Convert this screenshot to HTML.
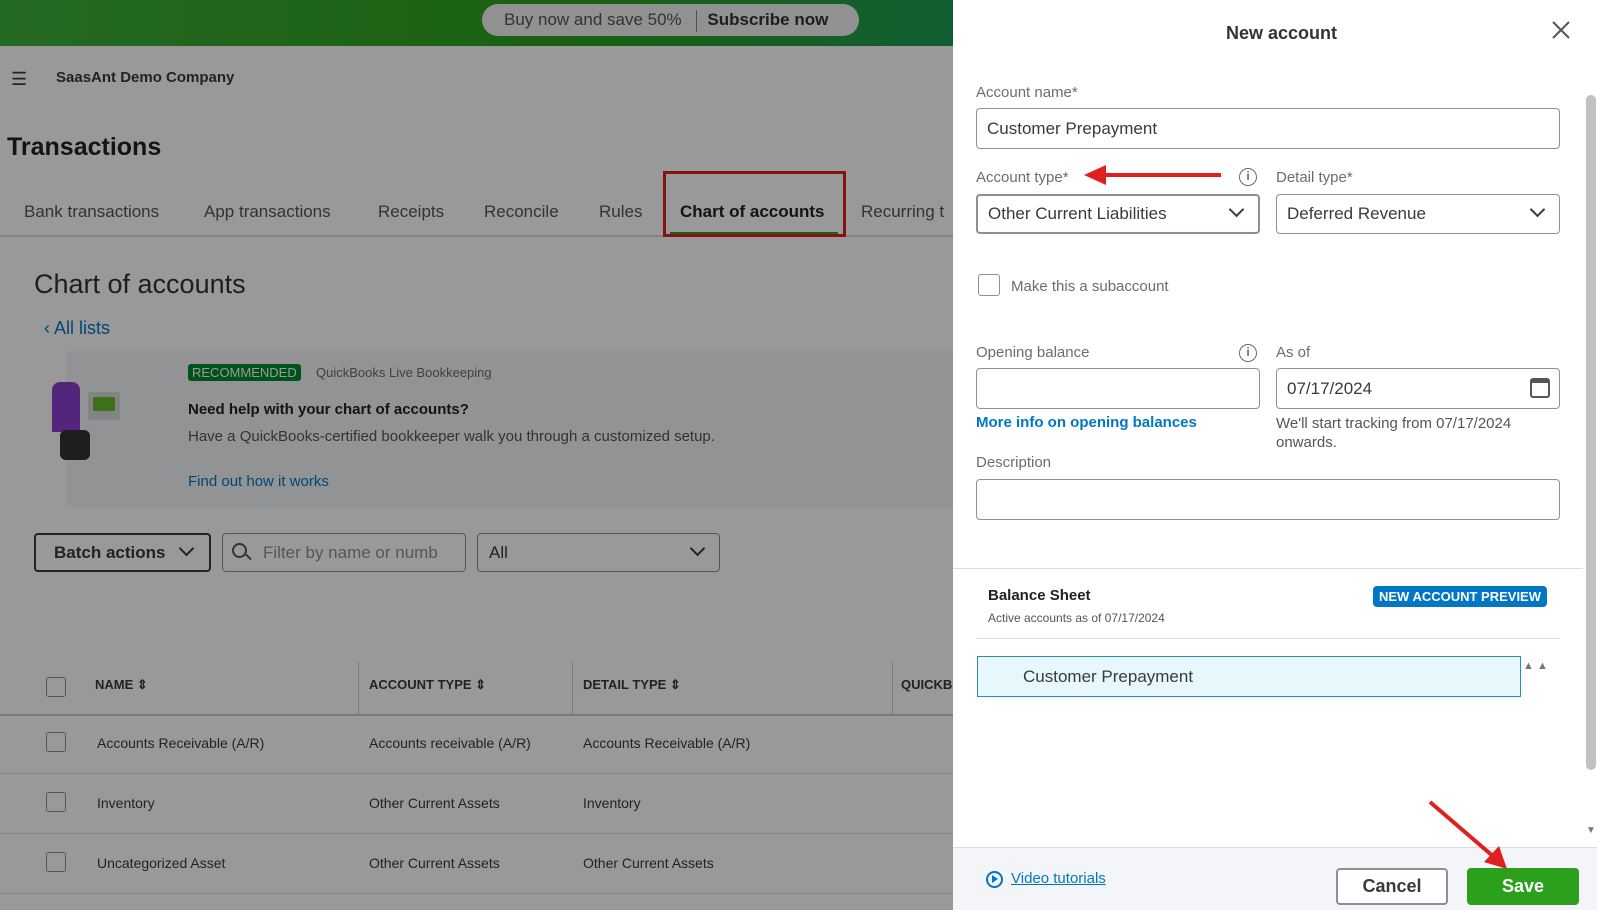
<!DOCTYPE html>
<html><head><meta charset="utf-8"><style>
*{box-sizing:border-box;margin:0;padding:0}
body{width:1597px;height:910px;overflow:hidden;position:relative;font-family:"Liberation Sans",sans-serif;background:#fff;color:#393a3d}
.a{position:absolute;white-space:nowrap}
.ov{position:absolute;left:0;top:0;width:953px;height:910px;background:rgba(0,0,0,0.4)}
.cb{position:absolute;width:20px;height:20px;border:1.5px solid #8d9096;border-radius:3px;background:#fff}
.lbl{font-size:15px;color:#6b6c72}
.inp{position:absolute;border:1px solid #8d9096;border-radius:4px;background:#fff}
.chev{position:absolute;width:11px;height:11px;border-right:2px solid #393a3d;border-bottom:2px solid #393a3d;transform:rotate(45deg)}
.info{position:absolute;width:18px;height:18px;border:1.5px solid #6b6c72;border-radius:50%;font-size:12px;text-align:center;line-height:15px;color:#6b6c72;font-weight:bold}
</style></head><body>
<div class="a" style="left:0;top:0;width:953px;height:46px;background:linear-gradient(90deg,#3fb13a,#2ca01c 60%,#1f9d55)"></div>
<div class="a" style="left:482px;top:4px;width:377px;height:32px;border-radius:16px;background:#f2f2f2;font-size:17px;line-height:32px;padding-left:22px;color:#555">Buy now and save 50% <span style="display:inline-block;width:1px;height:22px;background:#888;vertical-align:middle;margin:0 10px"></span><b style="color:#333">Subscribe now</b></div>
<div class="a" style="left:11px;top:69px;font-size:18px">☰</div>
<div class="a" style="left:56px;top:69px;font-size:15px;font-weight:bold">SaasAnt Demo Company</div>
<div class="a" style="left:7px;top:133px;font-size:25px;font-weight:bold;color:#222">Transactions</div>
<div class="a" style="left:0;top:202px;font-size:17px;color:#555">
<span class="a" style="left:24px">Bank transactions</span><span class="a" style="left:204px">App transactions</span><span class="a" style="left:378px">Receipts</span><span class="a" style="left:484px">Reconcile</span><span class="a" style="left:599px">Rules</span><span class="a" style="left:680px;color:#222;font-weight:bold">Chart of accounts</span><span class="a" style="left:861px">Recurring t</span></div>
<div class="a" style="left:0;top:235px;width:953px;height:2px;background:#ddd"></div>
<div class="a" style="left:670px;top:232px;width:168px;height:3px;background:#2ca01c"></div>
<div class="a" style="left:663px;top:171px;width:183px;height:66px;border:3px solid #e02020"></div>
<div class="a" style="left:34px;top:269px;font-size:27px;color:#333">Chart of accounts</div>
<div class="a" style="left:44px;top:318px;font-size:18px;color:#0077c5">‹ All lists</div>
<div class="a" style="left:66px;top:351px;width:887px;height:156px;background:#f4f5f8"></div>
<div class="a" style="left:52px;top:382px;width:28px;height:50px;background:#8b3fd1;border-radius:8px 8px 0 0"></div>
<div class="a" style="left:88px;top:392px;width:32px;height:28px;background:#d8dadd"></div>
<div class="a" style="left:93px;top:397px;width:22px;height:14px;background:#6bbd2a"></div>
<div class="a" style="left:60px;top:430px;width:30px;height:30px;background:#333;border-radius:6px"></div>
<div class="a" style="left:188px;top:364px;background:#00892e;color:#fff;font-size:13px;padding:1px 4px;border-radius:3px">RECOMMENDED</div>
<div class="a" style="left:316px;top:365px;font-size:13px;color:#6b6c72">QuickBooks Live Bookkeeping</div>
<div class="a" style="left:188px;top:401px;font-size:15px;font-weight:bold;color:#222">Need help with your chart of accounts?</div>
<div class="a" style="left:188px;top:428px;font-size:15px;color:#555">Have a QuickBooks-certified bookkeeper walk you through a customized setup.</div>
<div class="a" style="left:188px;top:473px;font-size:15px;color:#0077c5">Find out how it works</div>
<div class="a" style="left:34px;top:533px;width:177px;height:39px;border:2px solid #393a3d;border-radius:4px;font-size:17px;line-height:35px;padding-left:18px;font-weight:bold">Batch actions</div><div class="chev" style="left:181px;top:543px"></div>
<div class="inp" style="left:222px;top:533px;width:244px;height:39px;font-size:17px;line-height:37px;padding-left:40px;color:#8d9096">Filter by name or numb</div>
<div class="a" style="left:232px;top:543px;width:15px;height:15px;border:2px solid #555;border-radius:50%"></div>
<div class="a" style="left:245px;top:556px;width:7px;height:2px;background:#555;transform:rotate(45deg)"></div>
<div class="inp" style="left:477px;top:533px;width:243px;height:39px;font-size:17px;line-height:37px;padding-left:11px">All</div><div class="chev" style="left:692px;top:543px"></div>
<div class="a" style="left:0;top:714px;width:953px;height:2px;background:#ccc"></div>
<div class="a" style="left:358px;top:662px;width:1px;height:52px;background:#ccc"></div>
<div class="a" style="left:572px;top:662px;width:1px;height:52px;background:#ccc"></div>
<div class="a" style="left:892px;top:662px;width:1px;height:52px;background:#ccc"></div>
<div class="cb" style="left:46px;top:677px"></div>
<div class="a" style="left:95px;top:677px;font-size:13px;font-weight:bold">NAME ⇕</div>
<div class="a" style="left:369px;top:677px;font-size:13px;font-weight:bold">ACCOUNT TYPE ⇕</div>
<div class="a" style="left:583px;top:677px;font-size:13px;font-weight:bold">DETAIL TYPE ⇕</div>
<div class="a" style="left:901px;top:677px;font-size:13px;font-weight:bold">QUICKB</div>
<div class="a" style="left:0;top:773px;width:953px;height:1px;background:#ddd"></div>
<div class="a" style="left:0;top:833px;width:953px;height:1px;background:#ddd"></div>
<div class="a" style="left:0;top:893px;width:953px;height:1px;background:#ddd"></div>
<div class="cb" style="left:46px;top:732px"></div><div class="cb" style="left:46px;top:792px"></div><div class="cb" style="left:46px;top:852px"></div>
<div class="a" style="left:97px;top:735px;font-size:14px">Accounts Receivable (A/R)</div>
<div class="a" style="left:369px;top:735px;font-size:14px">Accounts receivable (A/R)</div>
<div class="a" style="left:583px;top:735px;font-size:14px">Accounts Receivable (A/R)</div>
<div class="a" style="left:97px;top:795px;font-size:14px">Inventory</div>
<div class="a" style="left:369px;top:795px;font-size:14px">Other Current Assets</div>
<div class="a" style="left:583px;top:795px;font-size:14px">Inventory</div>
<div class="a" style="left:97px;top:855px;font-size:14px">Uncategorized Asset</div>
<div class="a" style="left:369px;top:855px;font-size:14px">Other Current Assets</div>
<div class="a" style="left:583px;top:855px;font-size:14px">Other Current Assets</div>
<div class="ov"></div>
<div class="a" style="left:953px;top:0;width:644px;height:910px;background:#fff"></div>
<div class="a" style="left:1226px;top:23px;font-size:18px;font-weight:bold;color:#333">New account</div>
<svg class="a" style="left:1552px;top:21px" width="18" height="18"><path d="M1 1L17 17M17 1L1 17" stroke="#555" stroke-width="2"/></svg>
<div class="a" style="left:1586px;top:95px;width:10px;height:675px;background:#c1c1c1;border-radius:5px"></div>
<div class="a lbl" style="left:976px;top:84px">Account name*</div>
<div class="inp" style="left:976px;top:108px;width:584px;height:41px;font-size:17px;line-height:39px;padding-left:10px">Customer Prepayment</div>
<div class="a lbl" style="left:976px;top:169px">Account type*</div>
<div class="info" style="left:1239px;top:168px">i</div>
<div class="a lbl" style="left:1276px;top:169px">Detail type*</div>
<div class="inp" style="left:976px;top:194px;width:284px;height:40px;border:2px solid #8d9096;font-size:17px;line-height:36px;padding-left:10px">Other Current Liabilities</div><div class="chev" style="left:1231px;top:204px"></div>
<div class="inp" style="left:1276px;top:194px;width:284px;height:40px;font-size:17px;line-height:38px;padding-left:10px">Deferred Revenue</div><div class="chev" style="left:1532px;top:204px"></div>
<div class="cb" style="left:978px;top:274px;width:22px;height:22px;border-width:1px"></div>
<div class="a lbl" style="left:1011px;top:278px">Make this a subaccount</div>
<div class="a lbl" style="left:976px;top:344px">Opening balance</div>
<div class="info" style="left:1239px;top:344px">i</div>
<div class="a lbl" style="left:1276px;top:344px">As of</div>
<div class="inp" style="left:976px;top:368px;width:284px;height:41px"></div>
<div class="inp" style="left:1276px;top:368px;width:284px;height:41px;font-size:17px;line-height:39px;padding-left:10px">07/17/2024</div>
<div class="a" style="left:1530px;top:378px;width:20px;height:20px;border:2px solid #555;border-radius:3px;border-top-width:5px"></div>
<div class="a" style="left:976px;top:414px;font-size:15px;font-weight:bold;color:#0077c5">More info on opening balances</div>
<div class="a lbl" style="left:1276px;top:414px;line-height:19px;color:#555">We'll start tracking from 07/17/2024<br>onwards.</div>
<div class="a lbl" style="left:976px;top:454px">Description</div>
<div class="inp" style="left:976px;top:479px;width:584px;height:41px"></div>
<div class="a" style="left:953px;top:568px;width:630px;height:1px;background:#ddd"></div>
<div class="a" style="left:988px;top:587px;font-size:15px;font-weight:bold;color:#222">Balance Sheet</div>
<div class="a" style="left:1373px;top:586px;width:174px;height:21px;background:#0077c5;color:#fff;border-radius:4px;font-size:13px;font-weight:bold;text-align:center;line-height:21px">NEW ACCOUNT PREVIEW</div>
<div class="a" style="left:988px;top:611px;font-size:12px;color:#555">Active accounts as of 07/17/2024</div>
<div class="a" style="left:977px;top:638px;width:583px;height:1px;background:#ddd"></div>
<div class="a" style="left:977px;top:656px;width:544px;height:41px;background:#e6f8fc;border:1px solid #2a8fa0;font-size:17px;line-height:39px;padding-left:45px">Customer Prepayment</div>
<div class="a" style="left:1523px;top:660px;font-size:11px;color:#777">▲ ▲</div>
<div class="a" style="left:1586px;top:825px;font-size:10px;color:#777">▼</div>
<div class="a" style="left:953px;top:847px;width:644px;height:63px;background:#f4f5f8;border-top:1px solid #ddd"></div>
<div class="a" style="left:986px;top:871px;width:17px;height:17px;border:2px solid #0077c5;border-radius:50%"></div>
<div class="a" style="left:992px;top:875px;width:0;height:0;border-left:6px solid #0077c5;border-top:4px solid transparent;border-bottom:4px solid transparent"></div>
<div class="a" style="left:1011px;top:870px;font-size:15px;color:#0077c5;text-decoration:underline">Video tutorials</div>
<div class="a" style="left:1336px;top:868px;width:112px;height:37px;border:2px solid #8d9096;border-radius:4px;background:#fff;font-size:18px;font-weight:bold;text-align:center;line-height:33px">Cancel</div>
<div class="a" style="left:1467px;top:868px;width:112px;height:37px;background:#2ca01c;border-radius:4px;color:#fff;font-size:18px;font-weight:bold;text-align:center;line-height:37px">Save</div>
<svg class="a" style="left:0;top:0" width="1597" height="910">
<line x1="1221" y1="175" x2="1100" y2="175" stroke="#e02020" stroke-width="4"/>
<polygon points="1084,175 1106,165 1106,185" fill="#e02020"/>
<line x1="1430" y1="802" x2="1494" y2="857" stroke="#e02020" stroke-width="4"/>
<polygon points="1507,869 1484,862 1499,846" fill="#e02020"/>
</svg>
</body></html>
